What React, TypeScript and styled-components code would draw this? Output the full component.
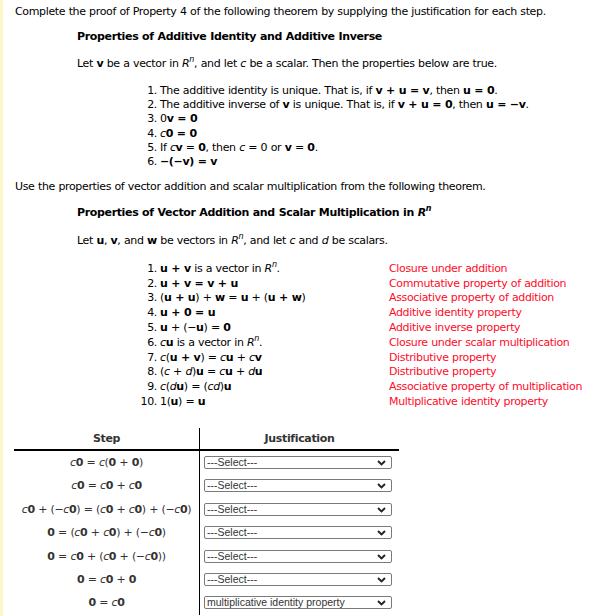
import React from "react";
import styled, { createGlobalStyle } from "styled-components";

const GlobalStyle = createGlobalStyle`
  html, body {
    margin: 0;
    padding: 0;
    background: #ffffff;
  }

  body {
    font-family: "DejaVu Sans", Verdana, sans-serif;
    font-size: 11px;
    letter-spacing: -0.35px;
    word-spacing: 0.3px;
    color: #000000;
  }
`;

// 수식 조각
const B = styled.b`
  font-weight: 700;
`;

const I = styled.i`
  font-style: italic;
`;

const Sup = styled.sup`
  font-size: 8px;
  font-style: italic;
  line-height: 0;
`;

const Rn = () => (
  <>
    <I>R</I>
    <Sup>n</Sup>
  </>
);

const Page = styled.div`
  min-height: 616px;

  border-left: 3px solid #fbf7c6;

  padding: 5px 0 0 12px;
`;

const Para = styled.div<{ $gap?: number }>`
  line-height: 14px;

  margin-bottom: ${(p) => p.$gap ?? 12}px;
`;

const Theorem = styled.div`
  padding-left: 62px;
`;

const TheoremTitle = styled.div<{ $gap?: number }>`
  font-weight: 700;
  line-height: 14px;

  margin-bottom: ${(p) => p.$gap ?? 13}px;
`;

const List = styled.div<{ $wide?: boolean }>`
  display: grid;
  grid-template-columns: ${(p) => (p.$wide ? "20px 226px auto" : "20px auto")};
  column-gap: 3px;
  row-gap: ${(p) => (p.$wide ? "0.78px" : "0.2px")};

  margin-left: 122px;
  margin-bottom: ${(p) => (p.$wide ? 19 : 11)}px;

  line-height: 14px;
`;

const Num = styled.div`
  text-align: right;
`;

const Item = styled.div`
  white-space: nowrap;
`;

const Reason = styled.div`
  color: #ff0a28;
  white-space: nowrap;
`;

const Table = styled.table`
  border-collapse: collapse;

  margin-left: -1px;

  width: 385px;
`;

const Th = styled.th<{ $right?: boolean }>`
  height: 21px;

  padding: 0;

  border-bottom: 2px solid #000000;
  border-left: ${(p) => (p.$right ? "1.5px solid #000000" : "none")};

  font-weight: 700;
  color: #333333;
  text-align: center;
`;

const Td = styled.td<{ $right?: boolean }>`
  height: 23.4px;

  padding: 0;

  border-left: ${(p) => (p.$right ? "1.5px solid #000000" : "none")};

  color: #333333;
  text-align: center;
  white-space: nowrap;

  &:first-child {
    width: 185px;
  }
`;

const SelectWrap = styled.div`
  position: relative;

  width: 188px;
  height: 13px;

  margin-left: 4px;
`;

const Select = styled.select`
  appearance: none;

  display: block;

  width: 100%;
  height: 13px;

  padding: 0 0 0 2px;

  border: 1px solid #7a7a7a;
  border-radius: 2px;

  background: #ffffff;

  font-family: "Liberation Sans", Arial, sans-serif;
  font-size: 10.5px;
  letter-spacing: 0;
  word-spacing: 0;
  line-height: 11px;
  color: #333333;
`;

const Chevron = styled.svg`
  position: absolute;
  top: 4px;
  right: 6px;

  width: 9px;
  height: 6px;

  pointer-events: none;
`;

const options = [
  "---Select---",
  "closure under addition",
  "commutative property of addition",
  "associative property of addition",
  "additive identity property",
  "additive inverse property",
  "closure under scalar multiplication",
  "distributive property",
  "associative property of multiplication",
  "multiplicative identity property",
];

function Justify({ value }: { value: string }) {
  return (
    <SelectWrap>
      <Select defaultValue={value}>
        {options.map((o) => (
          <option key={o} value={o}>
            {o}
          </option>
        ))}
      </Select>
      <Chevron viewBox="0 0 9 6">
        <path d="M1 1 L4.5 4.5 L8 1" fill="none" stroke="#222" strokeWidth="1.9" />
      </Chevron>
    </SelectWrap>
  );
}

const c0 = (
  <>
    <I>c</I>
    <B>0</B>
  </>
);
const z = <B>0</B>;

const steps: React.ReactNode[] = [
  <>
    {c0} = <I>c</I>({z} + {z})
  </>,
  <>
    {c0} = {c0} + {c0}
  </>,
  <>
    {c0} + (−{c0}) = ({c0} + {c0}) + (−{c0})
  </>,
  <>
    {z} = ({c0} + {c0}) + (−{c0})
  </>,
  <>
    {z} = {c0} + ({c0} + (−{c0}))
  </>,
  <>
    {z} = {c0} + {z}
  </>,
  <>
    {z} = {c0}
  </>,
];

const values = [
  "---Select---",
  "---Select---",
  "---Select---",
  "---Select---",
  "---Select---",
  "---Select---",
  "multiplicative identity property",
];

const firstList: React.ReactNode[] = [
  <>
    The additive identity is unique. That is, if <B>v + u = v</B>, then <B>u = 0</B>.
  </>,
  <>
    The additive inverse of <B>v</B> is unique. That is, if <B>v + u = 0</B>, then <B>u = −v</B>.
  </>,
  <>
    0<B>v = 0</B>
  </>,
  <>
    <I>c</I>
    <B>0 = 0</B>
  </>,
  <>
    If <I>c</I>
    <B>v</B> = <B>0</B>, then <I>c</I> = 0 or <B>v</B> = <B>0</B>.
  </>,
  <>
    <B>−(−v) = v</B>
  </>,
];

const secondList: [React.ReactNode, string][] = [
  [
    <>
      <B>u + v</B> is a vector in <Rn />.
    </>,
    "Closure under addition",
  ],
  [<B>u + v = v + u</B>, "Commutative property of addition"],
  [
    <>
      (<B>u + u</B>) + <B>w</B> = <B>u</B> + (<B>u + w</B>)
    </>,
    "Associative property of addition",
  ],
  [<B>u + 0 = u</B>, "Additive identity property"],
  [
    <>
      <B>u</B> + (−<B>u</B>) = <B>0</B>
    </>,
    "Additive inverse property",
  ],
  [
    <>
      <I>c</I>
      <B>u</B> is a vector in <Rn />.
    </>,
    "Closure under scalar multiplication",
  ],
  [
    <>
      <I>c</I>(<B>u + v</B>) = <I>c</I>
      <B>u</B> + <I>c</I>
      <B>v</B>
    </>,
    "Distributive property",
  ],
  [
    <>
      (<I>c</I> + <I>d</I>)<B>u</B> = <I>c</I>
      <B>u</B> + <I>d</I>
      <B>u</B>
    </>,
    "Distributive property",
  ],
  [
    <>
      <I>c</I>(<I>d</I>
      <B>u</B>) = (<I>cd</I>)<B>u</B>
    </>,
    "Associative property of multiplication",
  ],
  [
    <>
      1(<B>u</B>) = <B>u</B>
    </>,
    "Multiplicative identity property",
  ],
];

export default function App() {
  return (
    <>
      <GlobalStyle />
      <Page>
        <Para $gap={11}>
          Complete the proof of Property 4 of the following theorem by supplying the justification
          for each step.
        </Para>
        <Theorem>
          <TheoremTitle $gap={13}>Properties of Additive Identity and Additive Inverse</TheoremTitle>
          <Para $gap={13}>
            Let <B>v</B> be a vector in <Rn />, and let <I>c</I> be a scalar. Then the properties
            below are true.
          </Para>
        </Theorem>
        <List>
          {firstList.map((item, i) => (
            <React.Fragment key={i}>
              <Num>{i + 1}.</Num>
              <Item>{item}</Item>
            </React.Fragment>
          ))}
        </List>
        <Para $gap={12}>
          Use the properties of vector addition and scalar multiplication from the following
          theorem.
        </Para>
        <Theorem>
          <TheoremTitle $gap={14}>
            Properties of Vector Addition and Scalar Multiplication in <Rn />
          </TheoremTitle>
          <Para $gap={14}>
            Let <B>u</B>, <B>v</B>, and <B>w</B> be vectors in <Rn />, and let <I>c</I> and{" "}
            <I>d</I> be scalars.
          </Para>
        </Theorem>
        <List $wide>
          {secondList.map(([item, reason], i) => (
            <React.Fragment key={i}>
              <Num>{i + 1}.</Num>
              <Item>{item}</Item>
              <Reason>{reason}</Reason>
            </React.Fragment>
          ))}
        </List>
        <Table>
          <thead>
            <tr>
              <Th>Step</Th>
              <Th $right>Justification</Th>
            </tr>
          </thead>
          <tbody>
            {steps.map((s, i) => (
              <tr key={i}>
                <Td>{s}</Td>
                <Td $right>
                  <Justify value={values[i]} />
                </Td>
              </tr>
            ))}
          </tbody>
        </Table>
      </Page>
    </>
  );
}
